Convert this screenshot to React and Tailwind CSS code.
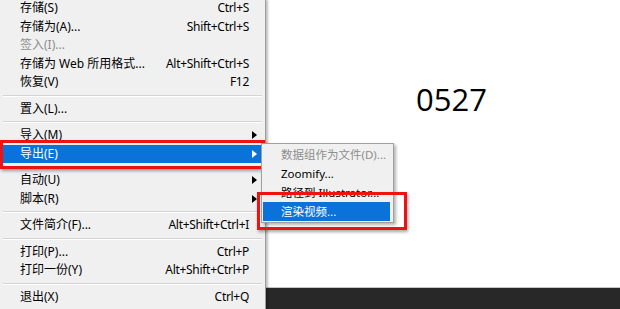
import React from 'react';

const font = { fontFamily: '"Noto Sans", "Noto Sans CJK SC", sans-serif' };

const menu = [
  { label: '存储(S)', key: 'Ctrl+S' },
  { label: '存储为(A)...', key: 'Shift+Ctrl+S' },
  { label: '签入(I)...', disabled: true },
  { label: '存储为 Web 所用格式...', key: 'Alt+Shift+Ctrl+S' },
  { label: '恢复(V)', key: 'F12' },
  { sep: true },
  { label: '置入(L)...' },
  { sep: true },
  { label: '导入(M)', sub: true },
  { label: '导出(E)', sub: true, active: true },
  { sep: true },
  { label: '自动(U)', sub: true },
  { label: '脚本(R)', sub: true },
  { sep: true },
  { label: '文件简介(F)...', key: 'Alt+Shift+Ctrl+I' },
  { sep: true },
  { label: '打印(P)...', key: 'Ctrl+P' },
  { label: '打印一份(Y)', key: 'Alt+Shift+Ctrl+P' },
  { sep: true },
  { label: '退出(X)', key: 'Ctrl+Q' },
];

const submenu = [
  { label: '数据组作为文件(D)...', disabled: true },
  { label: 'Zoomify...' },
  { label: '路径到 Illustrator...' },
  { label: '渲染视频...', active: true },
];

function Arrow({ white }) {
  return (
    <svg width="5" height="8" viewBox="0 0 5 8" className="absolute right-[5px] top-[5px]">
      <path d="M0 0 L5 4 L0 8 Z" fill={white ? '#ffffff' : '#000000'} />
    </svg>
  );
}

function MenuRow({ item }) {
  if (item.sep) {
    return (
      <div className="h-[8px] flex flex-col justify-center px-[3px]">
        <div className="h-px bg-[#d4d4d4]" />
        <div className="h-px bg-white" />
      </div>
    );
  }
  return (
    <div
      className={`relative h-[18.5px] mx-[3px] flex items-center justify-between whitespace-nowrap pl-[17px] pr-[13px] ${
        item.active ? 'bg-[#0b72d9] text-white' : item.disabled ? 'text-[#8e8e8e]' : 'text-black'
      }`}
    >
      <span>{item.label}</span>
      {item.key && <span className="tracking-[-0.3px]">{item.key}</span>}
      {item.sub && <Arrow white={item.active} />}
    </div>
  );
}

export default function App() {
  return (
    <div className="relative w-[620px] h-[309px] flex overflow-hidden bg-white text-[12px] leading-none" style={font}>
      {/* File menu */}
      <div className="w-[266px] shrink-0 bg-[#f0f0f0] border-r border-[#9d9d9d] shadow-[2px_0_2px_rgba(0,0,0,0.25)] z-10">
        <div className="mt-[-1px]">
          {menu.map((item, i) => (
            <MenuRow key={i} item={item} />
          ))}
        </div>
      </div>

      {/* Canvas */}
      <div className="flex-1 flex flex-col">
        <div className="flex-1 pl-[150px] pt-[84px]">
          <div className="text-[31px] leading-none text-black" style={{ fontFamily: '"Open Sans", sans-serif' }}>
            0527
          </div>
        </div>
        <div className="h-[22px] bg-[#282828] border-t border-[#c4c4c4]" />
      </div>

      {/* Red highlight around 导出 */}
      <div className="absolute left-0 top-[140px] w-[265px] h-[29px] border-[3px] border-[#ee1313] shadow-[1px_2px_3px_rgba(0,0,0,0.35)] z-20" />

      {/* Export submenu */}
      <div className="absolute left-[261px] top-[143px] w-[133px] h-[80px] bg-[#f0f0f0] border border-[#a0a0a0] shadow-[2px_2px_3px_rgba(0,0,0,0.3)] pt-px z-30 text-[11.5px]">
        {submenu.map((item, i) => (
          <div
            key={i}
            className={`h-[19px] ml-[1px] mr-[3px] flex items-center whitespace-nowrap overflow-hidden pl-[18px] ${
              item.active ? 'bg-[#0b72d9] text-white' : item.disabled ? 'text-[#8e8e8e]' : 'text-black'
            }`}
          >
            {item.label}
          </div>
        ))}
      </div>

      {/* Red highlight around 渲染视频 */}
      <div className="absolute left-[257px] top-[192px] w-[150px] h-[38px] border-[3px] border-[#ee1313] shadow-[1px_2px_3px_rgba(0,0,0,0.35)] z-40" />
    </div>
  );
}
